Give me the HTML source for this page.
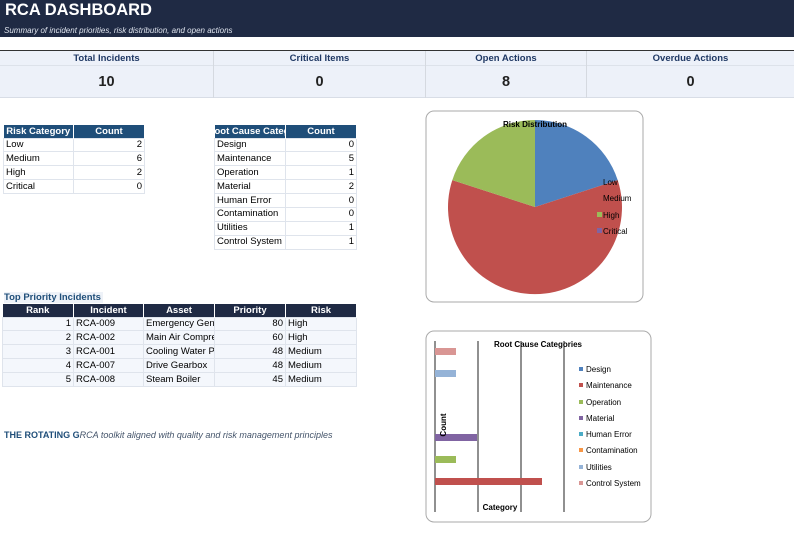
<!DOCTYPE html>
<html><head><meta charset="utf-8"><style>
*{margin:0;padding:0;box-sizing:border-box}
body{width:794px;height:541px;background:#fff;font-family:"Liberation Sans",sans-serif;position:relative;overflow:hidden;color:#000}
.a{position:absolute}
.hdr{left:0;top:0;width:794px;height:37px;background:#1f2a44;color:#fff}
.t{position:absolute;left:5px;top:1px;font-size:16.5px;font-weight:bold}
.s{position:absolute;left:4px;top:26px;font-size:8px;font-style:italic;color:#dfe4ee}
.kpi{top:50px;height:48px;background:#edf1f9;border-top:1.5px solid #333;border-bottom:1px solid #d8dde6;width:794px;left:0}
.kc{position:absolute;top:0;height:47px;border-right:1px solid #d5d9e0;text-align:center;color:#1f3864}
.kc .l{font-size:9.5px;font-weight:bold;height:15px;line-height:15px;border-bottom:1px solid #dde2ea}
.kc .v{font-size:14.5px;font-weight:bold;line-height:32px;color:#222}
table{position:absolute;border-collapse:collapse;font-size:9.5px;table-layout:fixed}
th{background:#1f4e79;color:#fff;font-weight:bold;height:13px;padding:0;border-right:1px solid #fff;font-size:9.5px;text-align:center;overflow:hidden;white-space:nowrap}
td{height:13.9px;padding:0 2px;border:1px solid #dfe4ec;white-space:nowrap;overflow:hidden;line-height:12px}
.r{text-align:right}
.dk th{background:#1f2a44}
.z td{background:#f4f7fc}
</style></head><body>
<div class="a hdr"><div class="t">RCA DASHBOARD</div><div class="s">Summary of incident priorities, risk distribution, and open actions</div></div>
<div class="a kpi">
<div class="kc" style="left:0;width:214px"><div class="l">Total Incidents</div><div class="v">10</div></div>
<div class="kc" style="left:214px;width:212px"><div class="l">Critical Items</div><div class="v">0</div></div>
<div class="kc" style="left:426px;width:161px"><div class="l">Open Actions</div><div class="v">8</div></div>
<div class="kc" style="left:587px;width:207px;border-right:none"><div class="l">Overdue Actions</div><div class="v">0</div></div>
</div>

<table style="left:3px;top:125px;width:141px">
<col style="width:70px"><col style="width:71px">
<tr><th>Risk Category</th><th>Count</th></tr>
<tr><td>Low</td><td class="r">2</td></tr>
<tr><td>Medium</td><td class="r">6</td></tr>
<tr><td>High</td><td class="r">2</td></tr>
<tr><td>Critical</td><td class="r">0</td></tr>
</table>

<table style="left:214px;top:125px;width:142px">
<col style="width:71px"><col style="width:71px">
<tr><th style="text-align:left">oot Cause Catego</th><th>Count</th></tr>
<tr><td>Design</td><td class="r">0</td></tr>
<tr><td>Maintenance</td><td class="r">5</td></tr>
<tr><td>Operation</td><td class="r">1</td></tr>
<tr><td>Material</td><td class="r">2</td></tr>
<tr><td>Human Error</td><td class="r">0</td></tr>
<tr><td>Contamination</td><td class="r">0</td></tr>
<tr><td>Utilities</td><td class="r">1</td></tr>
<tr><td>Control System</td><td class="r">1</td></tr>
</table>

<div class="a" style="left:4px;top:292px;font-size:9.5px;font-weight:bold;color:#1f4e79;background:#eef2f8;padding:0 2px 0 0">Top Priority Incidents</div>
<table class="dk z" style="left:2px;top:304px;width:354px">
<col style="width:71px"><col style="width:70px"><col style="width:71px"><col style="width:71px"><col style="width:71px">
<tr><th>Rank</th><th>Incident</th><th>Asset</th><th>Priority</th><th>Risk</th></tr>
<tr><td class="r">1</td><td>RCA-009</td><td>Emergency Gene</td><td class="r">80</td><td>High</td></tr>
<tr><td class="r">2</td><td>RCA-002</td><td>Main Air Compre</td><td class="r">60</td><td>High</td></tr>
<tr><td class="r">3</td><td>RCA-001</td><td>Cooling Water Pu</td><td class="r">48</td><td>Medium</td></tr>
<tr><td class="r">4</td><td>RCA-007</td><td>Drive Gearbox</td><td class="r">48</td><td>Medium</td></tr>
<tr><td class="r">5</td><td>RCA-008</td><td>Steam Boiler</td><td class="r">45</td><td>Medium</td></tr>
</table>

<div class="a" style="left:4px;top:430px;font-size:9px;color:#44546a;white-space:nowrap"><b style="color:#1f4e79">THE ROTATING G</b><i>RCA toolkit aligned with quality and risk management principles</i></div>

<svg class="a" style="left:0;top:0" width="794" height="541" font-family="Liberation Sans, sans-serif">
<rect x="426" y="111" width="217" height="191" rx="8" fill="#fff" stroke="#aaa"/>
<path d="M535 207 L535 120 A87 87 0 0 1 617.7 180.1 Z" fill="#4f81bd"/>
<path d="M535 207 L617.7 180.1 A87 87 0 1 1 452.3 180.1 Z" fill="#c0504d"/>
<path d="M535 207 L452.3 180.1 A87 87 0 0 1 535 120 Z" fill="#9bbb59"/>
<text x="535" y="127" font-size="8" font-weight="bold" text-anchor="middle">Risk Distribution</text>
<text x="603" y="185" font-size="8">Low</text>
<text x="603" y="201" font-size="8">Medium</text>
<rect x="597" y="212" width="5" height="5" fill="#9bbb59"/><text x="603" y="218" font-size="8">High</text>
<rect x="597" y="228" width="5" height="5" fill="#8064a2"/><text x="603" y="234" font-size="8">Critical</text>

<rect x="426" y="331" width="225" height="191" rx="8" fill="#fff" stroke="#aaa"/>
<g stroke="#222" stroke-width="1"><line x1="435" y1="341" x2="435" y2="512"/><line x1="478" y1="341" x2="478" y2="512"/><line x1="521" y1="341" x2="521" y2="512"/><line x1="564" y1="341" x2="564" y2="512"/></g>
<rect x="435" y="348" width="21" height="7" fill="#d99694"/>
<rect x="435" y="370" width="21" height="7" fill="#95b3d7"/>
<rect x="435" y="434" width="42" height="7" fill="#8064a2"/>
<rect x="435" y="456" width="21" height="7" fill="#9bbb59"/>
<rect x="435" y="478" width="107" height="7" fill="#c0504d"/>
<text x="538" y="347" font-size="8" font-weight="bold" text-anchor="middle">Root Cause Categories</text>
<text x="500" y="510" font-size="8" font-weight="bold" text-anchor="middle">Category</text>
<text x="446" y="425" font-size="8" font-weight="bold" text-anchor="middle" transform="rotate(-90 446 425)">Count</text>
<g font-size="8">
<rect x="579" y="367" width="4" height="4" fill="#4f81bd"/><text x="586" y="372">Design</text>
<rect x="579" y="383" width="4" height="4" fill="#c0504d"/><text x="586" y="388">Maintenance</text>
<rect x="579" y="400" width="4" height="4" fill="#9bbb59"/><text x="586" y="405">Operation</text>
<rect x="579" y="416" width="4" height="4" fill="#8064a2"/><text x="586" y="421">Material</text>
<rect x="579" y="432" width="4" height="4" fill="#4bacc6"/><text x="586" y="437">Human Error</text>
<rect x="579" y="448" width="4" height="4" fill="#f79646"/><text x="586" y="453">Contamination</text>
<rect x="579" y="465" width="4" height="4" fill="#95b3d7"/><text x="586" y="470">Utilities</text>
<rect x="579" y="481" width="4" height="4" fill="#d99694"/><text x="586" y="486">Control System</text>
</g>
</svg>
</body></html>
